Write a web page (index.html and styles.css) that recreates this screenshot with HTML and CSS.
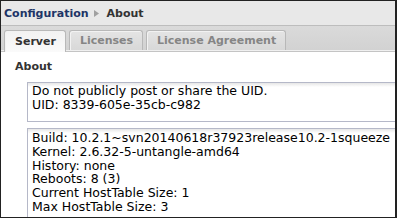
FILE: index.html
```html
<!DOCTYPE html>
<html lang="en">

<head>
    <meta charset="UTF-8">
    <meta name="viewport" content="width=device-width, initial-scale=1.0">
    <title>About</title>
    <link rel="stylesheet" href="styles.css">
</head>

<body>
    <div class="frame">
        <div class="breadcrumb">
            <span class="crumb-link">Configuration</span>
            <svg class="crumb-arrow" width="5" height="7" viewBox="0 0 5 7"><path d="M0 0 L5 3.5 L0 7 Z" fill="#a0a0a0"/></svg>
            <span class="crumb-current">About</span>
        </div>

        <div class="tab-strip">
            <div class="tab active">Server</div>
            <div class="tab">Licenses</div>
            <div class="tab">License Agreement</div>
        </div>

        <div class="panel">
            <h2 class="section-title">About</h2>
            <div class="field uid-box">
                Do not publicly post or share the UID.<br>
                UID: 8339-605e-35cb-c982
            </div>
            <div class="field info-box">
                Build: 10.2.1~svn20140618r37923release10.2-1squeeze<br>
                Kernel: 2.6.32-5-untangle-amd64<br>
                History: none<br>
                Reboots: 8 (3)<br>
                Current HostTable Size: 1<br>
                Max HostTable Size: 3
            </div>
        </div>
    </div>
</body>

</html>
```

FILE: styles.css
```css
body {
    margin: 0;
    padding: 0;
    background-color: #fff;
    font-family: "DejaVu Sans", Verdana, sans-serif;
}

.frame {
    width: 394px;
    height: 216px;
    border-top: 1px solid #222;
    border-left: 1px solid #222;
    border-right: 2px solid #222;
    border-bottom: 1px solid #222;
    overflow: hidden;
    background-color: #fff;
}

.breadcrumb {
    display: flex;
    align-items: center;
    height: 24px;
    padding-left: 3px;
    background-color: #e8e8e8;
    border-bottom: 1px solid #bdbdbd;
    font-size: 11px;
    font-weight: bold;
}

.crumb-link {
    color: #1d3466;
}

.crumb-arrow {
    margin: 0 8px 0 5px;
}

.crumb-current {
    color: #333;
}

.tab-strip {
    display: flex;
    align-items: flex-end;
    gap: 3px;
    height: 24px;
    padding-left: 3px;
    background: linear-gradient(#dadada, #d2d2d2);
    border-bottom: 1px solid #f0f0f0;
    box-shadow: 0 1px 0 #c4c4c4;
}

.tab {
    height: 19px;
    line-height: 19px;
    padding: 0 9px 0 10px;
    border: 1px solid #b8b8b8;
    border-bottom: none;
    border-radius: 3px 3px 0 0;
    box-shadow: inset 1px 1px 0 #f2f2f2;
    background: linear-gradient(#e4e4e4, #d8d8d8);
    color: #858585;
    font-size: 11px;
    font-weight: bold;
}

.tab.active {
    height: 21px;
    line-height: 21px;
    margin-bottom: -2px;
    background: linear-gradient(#f2f2f2, #fafafa);
    color: #333;
    position: relative;
}

.panel {
    padding: 9px 0 0 14px;
}

.section-title {
    margin: 0 0 8px 0;
    font-size: 11px;
    line-height: 14px;
    color: #333;
}

.field {
    margin-left: 12px;
    margin-right: -20px;
    padding: 1px 4px;
    border: 1px solid #b5b8c8;
    background: linear-gradient(#e6e6e6, #fff 4px);
    font-size: 12.5px;
    line-height: 13.8px;
    color: #000;
    white-space: nowrap;
}

.uid-box {
    height: 36px;
}

.info-box {
    margin-top: 6px;
    padding-top: 2px;
    height: 100px;
}
```
